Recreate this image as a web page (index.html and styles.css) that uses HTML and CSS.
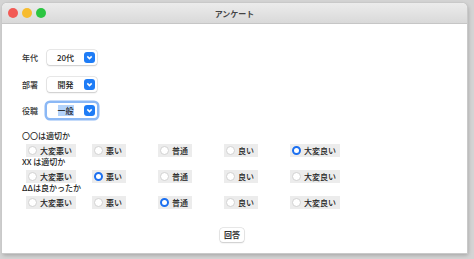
FILE: index.html
```html
<!DOCTYPE html>
<html lang="ja">
<head>
  <meta charset="UTF-8">
  <title>アンケート</title>
  <link rel="stylesheet" href="styles.css">
</head>
<body>
  <div id="window">
    <!-- Title bar -->
    <div class="titlebar">
      <div class="lights">
        <span class="light red"></span>
        <span class="light yellow"></span>
        <span class="light green"></span>
      </div>
      <div class="title">アンケート</div>
    </div>

    <div class="content">
      <!-- Profile selects -->
      <div class="field">
        <span class="field-label">年代</span>
        <div class="select"><span class="select-value">20代</span><span class="chevron"><svg viewBox="0 0 10 10"><path d="M3 4 L5 6 L7 4" /></svg></span></div>
      </div>
      <div class="field">
        <span class="field-label">部署</span>
        <div class="select"><span class="select-value">開発</span><span class="chevron"><svg viewBox="0 0 10 10"><path d="M3 4 L5 6 L7 4" /></svg></span></div>
      </div>
      <div class="field">
        <span class="field-label">役職</span>
        <div class="select focused"><span class="select-value"><span class="selected-text">一般</span></span><span class="chevron"><svg viewBox="0 0 10 10"><path d="M3 4 L5 6 L7 4" /></svg></span></div>
      </div>

      <!-- Questions -->
      <div class="questions">
        <div class="question">
          <div class="question-label">〇〇は適切か</div>
          <div class="options">
            <label class="option"><span class="radio"></span>大変悪い</label>
            <label class="option"><span class="radio"></span>悪い</label>
            <label class="option"><span class="radio"></span>普通</label>
            <label class="option"><span class="radio"></span>良い</label>
            <label class="option"><span class="radio checked"></span>大変良い</label>
          </div>
        </div>
        <div class="question">
          <div class="question-label">XX は適切か</div>
          <div class="options">
            <label class="option"><span class="radio"></span>大変悪い</label>
            <label class="option"><span class="radio checked"></span>悪い</label>
            <label class="option"><span class="radio"></span>普通</label>
            <label class="option"><span class="radio"></span>良い</label>
            <label class="option"><span class="radio"></span>大変良い</label>
          </div>
        </div>
        <div class="question">
          <div class="question-label">ΔΔは良かったか</div>
          <div class="options">
            <label class="option"><span class="radio"></span>大変悪い</label>
            <label class="option"><span class="radio"></span>悪い</label>
            <label class="option"><span class="radio checked"></span>普通</label>
            <label class="option"><span class="radio"></span>良い</label>
            <label class="option"><span class="radio"></span>大変良い</label>
          </div>
        </div>
      </div>

      <div class="actions">
        <button class="answer">回答</button>
      </div>
    </div>
  </div>
</body>
</html>
```

FILE: styles.css
```css
body {
  margin: 0;
  width: 474px;
  height: 259px;
  overflow: hidden;
  background: #d4d4d4;
  font-family: "Noto Sans CJK JP", "Noto Sans", sans-serif;
  font-size: 8px;
  font-weight: 500;
  color: #222;
}
#window {
  margin: 3px 0 0 2px;
  width: 465px;
  height: 250px;
  background: #fff;
  border-radius: 5px 5px 0 0;
  box-shadow: 0 0 0 1px #c9c9c9, 1px 2px 4px rgba(0, 0, 0, 0.25);
  display: flex;
  flex-direction: column;
}
.titlebar {
  height: 20px;
  position: relative;
  background: linear-gradient(#ececec, #d9d9d9);
  border-bottom: 1px solid #c6c6c6;
  border-radius: 5px 5px 0 0;
  display: flex;
  align-items: center;
  justify-content: center;
}
.lights {
  position: absolute;
  left: 6px;
  top: 5px;
  display: flex;
  gap: 4px;
}
.light {
  width: 10px;
  height: 10px;
  border-radius: 50%;
}
.red { background: #f25a55; }
.yellow { background: #f7bc2f; }
.green { background: #2bc541; }
.title {
  font-weight: bold;
  color: #444;
  font-size: 8px;
}
.content {
  flex: 1;
  padding: 26px 0 0 20px;
  display: flex;
  flex-direction: column;
}
.field {
  display: flex;
  align-items: center;
  height: 15px;
  margin-bottom: 11.5px;
}
.field-label {
  width: 25px;
  color: #333;
}
.select {
  width: 50px;
  height: 15px;
  box-sizing: border-box;
  background: #fff;
  border-radius: 3px;
  box-shadow: 0 0 0 0.5px #cfcfcf, 0 1px 1.5px rgba(0, 0, 0, 0.2);
  display: flex;
  align-items: center;
  padding: 0 2px 0 0;
}
.select-value {
  flex: 1;
  text-align: center;
  color: #222;
}
.chevron {
  width: 11px;
  height: 11px;
  border-radius: 3px;
  background: #1e7cf6;
  display: flex;
}
.chevron svg {
  width: 11px;
  height: 11px;
  fill: none;
  stroke: #fff;
  stroke-width: 1.4;
}
.select.focused {
  box-shadow: 0 0 0 2.5px #8bb8f5;
}
.selected-text {
  background: #b3d3fb;
}
.questions {
  margin-top: -1px;
}
.question-label {
  line-height: 13px;
  color: #222;
}
.options {
  display: grid;
  grid-template-columns: repeat(5, 66px);
  margin-left: 4px;
  height: 14px;
  margin-bottom: -3px;
  margin-top: 2px;
}
.option {
  justify-self: start;
  display: flex;
  align-items: center;
  height: 13px;
  padding: 0 4px 0 2px;
  background: #ececec;
  color: #222;
}
.radio {
  width: 9px;
  height: 9px;
  box-sizing: border-box;
  border-radius: 50%;
  background: #fff;
  border: 0.5px solid #d2d2d2;
  margin-right: 3px;
}
.radio.checked {
  border: 2.5px solid #1b6ff0;
  background: #fff;
}
.actions {
  display: flex;
  justify-content: center;
  padding-right: 25px;
  margin-top: 21px;
}
.answer {
  font-family: inherit;
  font-size: 8px;
  font-weight: bold;
  color: #333;
  background: #fff;
  border: none;
  border-radius: 3px;
  padding: 0 4px;
  height: 14px;
  box-shadow: 0 0 0 0.5px #d0d0d0, 0 1px 1.5px rgba(0, 0, 0, 0.2);
}
```
